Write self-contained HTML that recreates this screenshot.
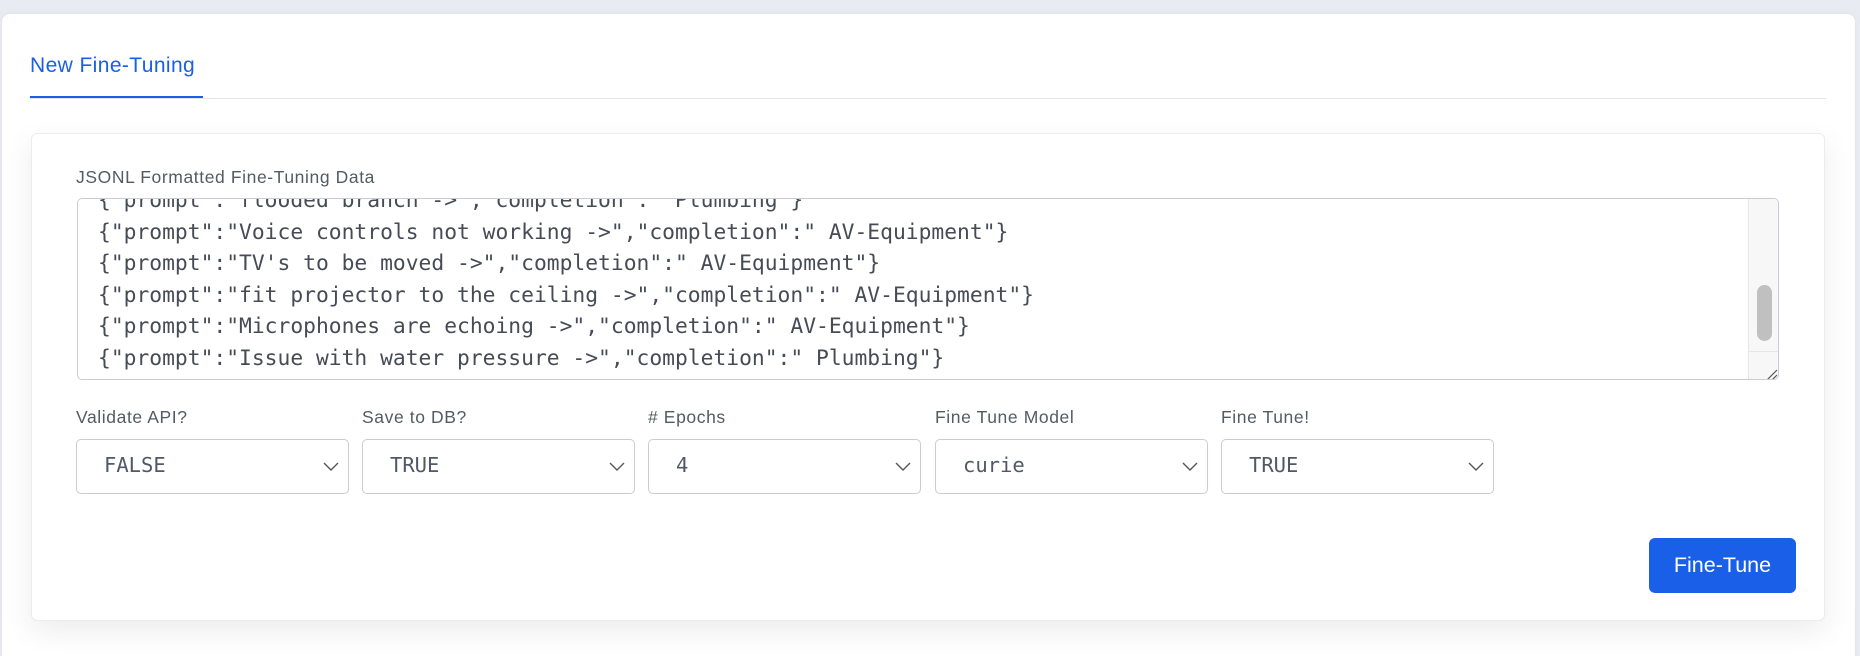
<!DOCTYPE html>
<html style="width:1860px;height:656px;overflow:hidden"><head><meta charset="utf-8"><style>
*{box-sizing:border-box;margin:0;padding:0}
body{width:1860px;height:656px;background:#e9ebf2;font-family:"Liberation Sans",sans-serif;position:relative;overflow:hidden}
.outer{position:absolute;left:2px;top:14px;width:1853px;height:642px;background:#fff;border-radius:8px 8px 0 0;box-shadow:0 0 4px rgba(0,0,0,.06)}
.tab{position:absolute;left:30px;top:54px;font-size:21px;letter-spacing:0.4px;color:#1a5fe8}
.uline{position:absolute;left:30px;top:96px;width:173px;height:3px;background:#1a5fe8}
.div{position:absolute;left:30px;top:98px;width:1796px;height:1px;background:#e2e4e8}
.inner{position:absolute;left:31px;top:133px;width:1794px;height:488px;background:#fff;border:1px solid #ebecef;border-radius:6px;box-shadow:0 10px 30px rgba(0,0,0,.08)}
.lab{position:absolute;font-size:17.5px;letter-spacing:0.6px;color:#555a64}
.ta{position:absolute;left:77px;top:198px;width:1702px;height:182px;border:1px solid #c9ccd4;border-radius:5px;overflow:hidden;background:#fff}
.code{position:absolute;left:20px;font-family:"DejaVu Sans Mono","Liberation Mono",monospace;font-size:21.3px;color:#464b55;white-space:pre;line-height:31.6px}
.sb{position:absolute;right:0;top:0;width:30px;height:182px;background:#f7f7f7;border-left:1px solid #e6e6e6}
.thumb{position:absolute;left:8px;top:86px;width:15px;height:56px;background:#c0c0c0;border-radius:8px}
.corner{position:absolute;left:0;bottom:0;width:30px;height:30px;border-top:1px solid #e6e6e6}
.sel{position:absolute;top:439px;width:273px;height:55px;border:1px solid #c9ccd4;border-radius:5px;background:#fff}
.sel span{position:absolute;left:27px;top:13px;font-family:"DejaVu Sans Mono","Liberation Mono",monospace;font-size:20.5px;color:#525866}
.sel svg{position:absolute;right:9px;top:21px}
.btn{position:absolute;left:1649px;top:538px;width:147px;height:55px;background:#1a5fe8;border-radius:6px;color:#fff;font-size:21.5px;text-align:center;line-height:55px}
</style></head><body>
<div class="outer"></div>
<div class="tab">New Fine-Tuning</div>
<div class="uline"></div>
<div class="div"></div>
<div class="inner"></div>
<div class="lab" style="left:76px;top:167px">JSONL Formatted Fine-Tuning Data</div>
<div class="ta">
<div class="code" style="top:-14px">{"prompt":"flooded branch ->","completion":" Plumbing"}
{"prompt":"Voice controls not working ->","completion":" AV-Equipment"}
{"prompt":"TV's to be moved ->","completion":" AV-Equipment"}
{"prompt":"fit projector to the ceiling ->","completion":" AV-Equipment"}
{"prompt":"Microphones are echoing ->","completion":" AV-Equipment"}
{"prompt":"Issue with water pressure ->","completion":" Plumbing"}</div>
<div class="sb"><div class="thumb"></div><div class="corner"><svg width="30" height="30"><path d="M18 28L28 18M23 28L28 23" stroke="#555" stroke-width="1.2"/></svg></div></div>
</div>
<div class="lab" style="left:76px;top:407px">Validate API?</div>
<div class="lab" style="left:362px;top:407px">Save to DB?</div>
<div class="lab" style="left:648px;top:407px"># Epochs</div>
<div class="lab" style="left:935px;top:407px">Fine Tune Model</div>
<div class="lab" style="left:1221px;top:407px">Fine Tune!</div>
<div class="sel" style="left:76px"><span>FALSE</span><svg width="16" height="12"><path d="M1 2L8 9L15 2" fill="none" stroke="#555" stroke-width="1.4"/></svg></div>
<div class="sel" style="left:362px"><span>TRUE</span><svg width="16" height="12"><path d="M1 2L8 9L15 2" fill="none" stroke="#555" stroke-width="1.4"/></svg></div>
<div class="sel" style="left:648px"><span>4</span><svg width="16" height="12"><path d="M1 2L8 9L15 2" fill="none" stroke="#555" stroke-width="1.4"/></svg></div>
<div class="sel" style="left:935px"><span>curie</span><svg width="16" height="12"><path d="M1 2L8 9L15 2" fill="none" stroke="#555" stroke-width="1.4"/></svg></div>
<div class="sel" style="left:1221px"><span>TRUE</span><svg width="16" height="12"><path d="M1 2L8 9L15 2" fill="none" stroke="#555" stroke-width="1.4"/></svg></div>
<div class="btn">Fine-Tune</div>
</body></html>
